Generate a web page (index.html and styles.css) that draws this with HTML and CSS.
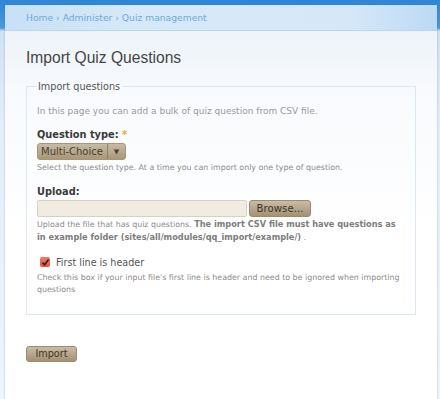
FILE: index.html
```html
<!DOCTYPE html>
<html>
<head>
<meta charset="utf-8">
<link rel="stylesheet" href="styles.css">
</head>
<body>
<div class="page">
  <div class="crumbs"><a>Home</a> › <a>Administer</a> › <a>Quiz management</a></div>
  <div class="content">
    <h1 class="title">Import Quiz Questions</h1>
    <fieldset class="box">
      <legend class="legend">Import questions</legend>
      <p class="intro">In this page you can add a bulk of quiz question from CSV file.</p>
      <div class="item">
        <label class="label">Question type: <span class="req">*</span></label>
        <div class="select"><span class="sel-text">Multi-Choice</span><span class="sel-arrow">▼</span></div>
        <div class="desc">Select the question type. At a time you can import only one type of question.</div>
      </div>
      <div class="item">
        <label class="label">Upload:</label>
        <div class="file"><span class="file-box"></span><span class="btn browse">Browse...</span></div>
        <div class="desc">Upload the file that has quiz questions. <b>The import CSV file must have questions as in example folder (sites/all/modules/qq_import/example/)</b> .</div>
      </div>
      <div class="item check-item">
        <div class="check-row"><span class="checkbox"><svg width="9" height="9" viewBox="0 0 9 9"><path d="M1.5 4.6 L3.6 6.8 L7.6 1.6" fill="none" stroke="#3a1a14" stroke-width="1.6"/></svg></span><span class="check-label">First line is header</span></div>
        <div class="desc">Check this box if your input file's first line is header and need to be ignored when importing questions</div>
      </div>
    </fieldset>
    <div class="actions"><span class="btn import">Import</span></div>
  </div>
</div>
</body>
</html>
```
FILE: styles.css
```css
html, body {
  margin: 0;
  padding: 0;
}
body {
  width: 440px;
  height: 399px;
  overflow: hidden;
  background: linear-gradient(to bottom, #2f86d6 0px, #4a98dc 28px, #cfe1f3 31px, #e3eef8 120px, #eef5fb 399px);
  font-family: "DejaVu Sans", sans-serif;
}
.page {
  margin: 5px 3px 0 5px;
  height: 394px;
  box-shadow: 0 0 2px rgba(40, 90, 150, 0.35);
  background: #fbfdff;
}
.crumbs {
  height: 26px;
  box-sizing: border-box;
  padding: 7px 0 0 21px;
  font-size: 9.2px;
  color: #74aee0;
  background: linear-gradient(to right, #c7e0f6 0%, #d6e9f8 30%, #d4e8f8 80%, #bcd9f4 100%);
  border-bottom: 1px solid #b9d6ef;
}
.crumbs a { color: #6ea8dc; }
.content {
  padding: 16px 21px 0 21px;
  background: linear-gradient(to bottom, #edf3f9 0px, #f8fafd 60px, #ffffff 200px);
  height: 352px;
}
.title {
  margin: 0;
  font-family: "Liberation Sans", Arial, sans-serif;
  font-weight: normal;
  font-size: 15.6px;
  color: #454545;
  line-height: 22px;
}
.box {
  margin: 12px 0 0 0;
  padding: 0 10px 18px 10px;
  border: 1px solid #dbe7f3;
  box-sizing: border-box;
}
.legend {
  font-size: 9.7px;
  color: #555;
  padding: 0 2px 0 1px;
  margin-left: 0;
}
.intro {
  margin: 13px 0 0 0;
  font-size: 9px;
  color: #9a9a9a;
  line-height: 12px;
}
.item { margin-top: 12px; }
.label {
  display: block;
  font-size: 9.8px;
  font-weight: bold;
  color: #3a3a3a;
  line-height: 12px;
}
.req { color: #f4a632; }
.select {
  display: flex;
  margin-top: 2px;
  height: 17px;
  width: 89px;
  box-sizing: border-box;
  border-radius: 3px;
  background: linear-gradient(to bottom, #c8bba4, #a89879);
  border: 1px solid #a5977c;
  font-size: 10px;
  color: #4a4033;
  align-items: center;
}
.sel-text {
  flex: 1;
  padding-left: 3px;
  border-right: 1px solid #8f8166;
  line-height: 15px;
  white-space: nowrap;
}
.sel-arrow {
  width: 17px;
  text-align: center;
  font-size: 7px;
  color: #4f4535;
}
.desc {
  margin-top: 1px;
  font-size: 7.9px;
  color: #8c8c8c;
  line-height: 13px;
}
.desc b { color: #7d7d7d; font-size: 8.2px; line-height: 13px; }
.file {
  display: flex;
  margin-top: 2px;
  gap: 2px;
  height: 17px;
}
.file-box {
  width: 210px;
  box-sizing: border-box;
  background: #f1ece2;
  border: 1px solid #d9cfbd;
  border-radius: 2px;
}
.btn {
  display: inline-flex;
  align-items: center;
  justify-content: center;
  box-sizing: border-box;
  border-radius: 3px;
  background: linear-gradient(to bottom, #c9bca5, #a39173);
  border: 1px solid #9b8b6f;
  color: #3e3427;
  font-size: 10.2px;
}
.browse { width: 62px; }
.check-item { margin-top: 11px; }
.check-row {
  display: flex;
  align-items: center;
  height: 14px;
}
.checkbox {
  width: 10px;
  height: 10px;
  margin-left: 3px;
  margin-right: 6px;
  border-radius: 2px;
  background: linear-gradient(to bottom, #f47a66, #e2553f);
  display: flex;
  align-items: center;
  justify-content: center;
}
.check-label {
  font-size: 9.6px;
  color: #555;
}
.check-item .desc { margin-top: 3px; line-height: 12px; }
.actions { margin-top: 27px; }
.import {
  width: 51px;
  height: 16px;
  font-size: 9.7px;
}
```
